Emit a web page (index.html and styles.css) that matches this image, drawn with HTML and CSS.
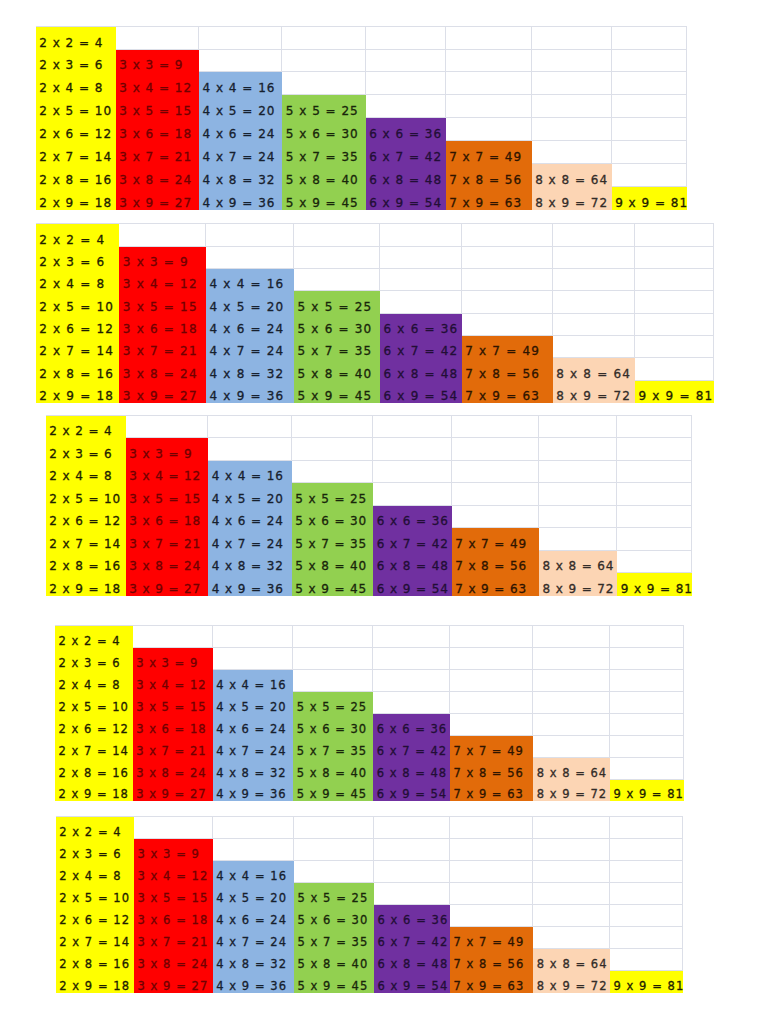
FILE: index.html
```html
<!DOCTYPE html>
<html lang="en">
<head>
<meta charset="utf-8">
<title>Tablas de multiplicar</title>
<link rel="stylesheet" href="styles.css">
</head>
<body>
<main class="page">

<section class="sheet sheet-1">
<div class="c c2">2 x 2 = 4</div><div class="c e"></div><div class="c e"></div><div class="c e"></div><div class="c e"></div><div class="c e"></div><div class="c e"></div><div class="c e"></div>
<div class="c c2">2 x 3 = 6</div><div class="c c3">3 x 3 = 9</div><div class="c e"></div><div class="c e"></div><div class="c e"></div><div class="c e"></div><div class="c e"></div><div class="c e"></div>
<div class="c c2">2 x 4 = 8</div><div class="c c3">3 x 4 = 12</div><div class="c c4">4 x 4 = 16</div><div class="c e"></div><div class="c e"></div><div class="c e"></div><div class="c e"></div><div class="c e"></div>
<div class="c c2">2 x 5 = 10</div><div class="c c3">3 x 5 = 15</div><div class="c c4">4 x 5 = 20</div><div class="c c5">5 x 5 = 25</div><div class="c e"></div><div class="c e"></div><div class="c e"></div><div class="c e"></div>
<div class="c c2">2 x 6 = 12</div><div class="c c3">3 x 6 = 18</div><div class="c c4">4 x 6 = 24</div><div class="c c5">5 x 6 = 30</div><div class="c c6">6 x 6 = 36</div><div class="c e"></div><div class="c e"></div><div class="c e"></div>
<div class="c c2">2 x 7 = 14</div><div class="c c3">3 x 7 = 21</div><div class="c c4">4 x 7 = 24</div><div class="c c5">5 x 7 = 35</div><div class="c c6">6 x 7 = 42</div><div class="c c7">7 x 7 = 49</div><div class="c e"></div><div class="c e"></div>
<div class="c c2">2 x 8 = 16</div><div class="c c3">3 x 8 = 24</div><div class="c c4">4 x 8 = 32</div><div class="c c5">5 x 8 = 40</div><div class="c c6">6 x 8 = 48</div><div class="c c7">7 x 8 = 56</div><div class="c c8">8 x 8 = 64</div><div class="c e"></div>
<div class="c c2">2 x 9 = 18</div><div class="c c3">3 x 9 = 27</div><div class="c c4">4 x 9 = 36</div><div class="c c5">5 x 9 = 45</div><div class="c c6">6 x 9 = 54</div><div class="c c7">7 x 9 = 63</div><div class="c c8">8 x 9 = 72</div><div class="c c9">9 x 9 = 81</div>
</section>

<section class="sheet sheet-2">
<div class="c c2">2 x 2 = 4</div><div class="c e"></div><div class="c e"></div><div class="c e"></div><div class="c e"></div><div class="c e"></div><div class="c e"></div><div class="c e"></div>
<div class="c c2">2 x 3 = 6</div><div class="c c3">3 x 3 = 9</div><div class="c e"></div><div class="c e"></div><div class="c e"></div><div class="c e"></div><div class="c e"></div><div class="c e"></div>
<div class="c c2">2 x 4 = 8</div><div class="c c3">3 x 4 = 12</div><div class="c c4">4 x 4 = 16</div><div class="c e"></div><div class="c e"></div><div class="c e"></div><div class="c e"></div><div class="c e"></div>
<div class="c c2">2 x 5 = 10</div><div class="c c3">3 x 5 = 15</div><div class="c c4">4 x 5 = 20</div><div class="c c5">5 x 5 = 25</div><div class="c e"></div><div class="c e"></div><div class="c e"></div><div class="c e"></div>
<div class="c c2">2 x 6 = 12</div><div class="c c3">3 x 6 = 18</div><div class="c c4">4 x 6 = 24</div><div class="c c5">5 x 6 = 30</div><div class="c c6">6 x 6 = 36</div><div class="c e"></div><div class="c e"></div><div class="c e"></div>
<div class="c c2">2 x 7 = 14</div><div class="c c3">3 x 7 = 21</div><div class="c c4">4 x 7 = 24</div><div class="c c5">5 x 7 = 35</div><div class="c c6">6 x 7 = 42</div><div class="c c7">7 x 7 = 49</div><div class="c e"></div><div class="c e"></div>
<div class="c c2">2 x 8 = 16</div><div class="c c3">3 x 8 = 24</div><div class="c c4">4 x 8 = 32</div><div class="c c5">5 x 8 = 40</div><div class="c c6">6 x 8 = 48</div><div class="c c7">7 x 8 = 56</div><div class="c c8">8 x 8 = 64</div><div class="c e"></div>
<div class="c c2">2 x 9 = 18</div><div class="c c3">3 x 9 = 27</div><div class="c c4">4 x 9 = 36</div><div class="c c5">5 x 9 = 45</div><div class="c c6">6 x 9 = 54</div><div class="c c7">7 x 9 = 63</div><div class="c c8">8 x 9 = 72</div><div class="c c9">9 x 9 = 81</div>
</section>

<section class="sheet sheet-3">
<div class="c c2">2 x 2 = 4</div><div class="c e"></div><div class="c e"></div><div class="c e"></div><div class="c e"></div><div class="c e"></div><div class="c e"></div><div class="c e"></div>
<div class="c c2">2 x 3 = 6</div><div class="c c3">3 x 3 = 9</div><div class="c e"></div><div class="c e"></div><div class="c e"></div><div class="c e"></div><div class="c e"></div><div class="c e"></div>
<div class="c c2">2 x 4 = 8</div><div class="c c3">3 x 4 = 12</div><div class="c c4">4 x 4 = 16</div><div class="c e"></div><div class="c e"></div><div class="c e"></div><div class="c e"></div><div class="c e"></div>
<div class="c c2">2 x 5 = 10</div><div class="c c3">3 x 5 = 15</div><div class="c c4">4 x 5 = 20</div><div class="c c5">5 x 5 = 25</div><div class="c e"></div><div class="c e"></div><div class="c e"></div><div class="c e"></div>
<div class="c c2">2 x 6 = 12</div><div class="c c3">3 x 6 = 18</div><div class="c c4">4 x 6 = 24</div><div class="c c5">5 x 6 = 30</div><div class="c c6">6 x 6 = 36</div><div class="c e"></div><div class="c e"></div><div class="c e"></div>
<div class="c c2">2 x 7 = 14</div><div class="c c3">3 x 7 = 21</div><div class="c c4">4 x 7 = 24</div><div class="c c5">5 x 7 = 35</div><div class="c c6">6 x 7 = 42</div><div class="c c7">7 x 7 = 49</div><div class="c e"></div><div class="c e"></div>
<div class="c c2">2 x 8 = 16</div><div class="c c3">3 x 8 = 24</div><div class="c c4">4 x 8 = 32</div><div class="c c5">5 x 8 = 40</div><div class="c c6">6 x 8 = 48</div><div class="c c7">7 x 8 = 56</div><div class="c c8">8 x 8 = 64</div><div class="c e"></div>
<div class="c c2">2 x 9 = 18</div><div class="c c3">3 x 9 = 27</div><div class="c c4">4 x 9 = 36</div><div class="c c5">5 x 9 = 45</div><div class="c c6">6 x 9 = 54</div><div class="c c7">7 x 9 = 63</div><div class="c c8">8 x 9 = 72</div><div class="c c9">9 x 9 = 81</div>
</section>

<section class="sheet sheet-4">
<div class="c c2">2 x 2 = 4</div><div class="c e"></div><div class="c e"></div><div class="c e"></div><div class="c e"></div><div class="c e"></div><div class="c e"></div><div class="c e"></div>
<div class="c c2">2 x 3 = 6</div><div class="c c3">3 x 3 = 9</div><div class="c e"></div><div class="c e"></div><div class="c e"></div><div class="c e"></div><div class="c e"></div><div class="c e"></div>
<div class="c c2">2 x 4 = 8</div><div class="c c3">3 x 4 = 12</div><div class="c c4">4 x 4 = 16</div><div class="c e"></div><div class="c e"></div><div class="c e"></div><div class="c e"></div><div class="c e"></div>
<div class="c c2">2 x 5 = 10</div><div class="c c3">3 x 5 = 15</div><div class="c c4">4 x 5 = 20</div><div class="c c5">5 x 5 = 25</div><div class="c e"></div><div class="c e"></div><div class="c e"></div><div class="c e"></div>
<div class="c c2">2 x 6 = 12</div><div class="c c3">3 x 6 = 18</div><div class="c c4">4 x 6 = 24</div><div class="c c5">5 x 6 = 30</div><div class="c c6">6 x 6 = 36</div><div class="c e"></div><div class="c e"></div><div class="c e"></div>
<div class="c c2">2 x 7 = 14</div><div class="c c3">3 x 7 = 21</div><div class="c c4">4 x 7 = 24</div><div class="c c5">5 x 7 = 35</div><div class="c c6">6 x 7 = 42</div><div class="c c7">7 x 7 = 49</div><div class="c e"></div><div class="c e"></div>
<div class="c c2">2 x 8 = 16</div><div class="c c3">3 x 8 = 24</div><div class="c c4">4 x 8 = 32</div><div class="c c5">5 x 8 = 40</div><div class="c c6">6 x 8 = 48</div><div class="c c7">7 x 8 = 56</div><div class="c c8">8 x 8 = 64</div><div class="c e"></div>
<div class="c c2">2 x 9 = 18</div><div class="c c3">3 x 9 = 27</div><div class="c c4">4 x 9 = 36</div><div class="c c5">5 x 9 = 45</div><div class="c c6">6 x 9 = 54</div><div class="c c7">7 x 9 = 63</div><div class="c c8">8 x 9 = 72</div><div class="c c9">9 x 9 = 81</div>
</section>

<section class="sheet sheet-5">
<div class="c c2">2 x 2 = 4</div><div class="c e"></div><div class="c e"></div><div class="c e"></div><div class="c e"></div><div class="c e"></div><div class="c e"></div><div class="c e"></div>
<div class="c c2">2 x 3 = 6</div><div class="c c3">3 x 3 = 9</div><div class="c e"></div><div class="c e"></div><div class="c e"></div><div class="c e"></div><div class="c e"></div><div class="c e"></div>
<div class="c c2">2 x 4 = 8</div><div class="c c3">3 x 4 = 12</div><div class="c c4">4 x 4 = 16</div><div class="c e"></div><div class="c e"></div><div class="c e"></div><div class="c e"></div><div class="c e"></div>
<div class="c c2">2 x 5 = 10</div><div class="c c3">3 x 5 = 15</div><div class="c c4">4 x 5 = 20</div><div class="c c5">5 x 5 = 25</div><div class="c e"></div><div class="c e"></div><div class="c e"></div><div class="c e"></div>
<div class="c c2">2 x 6 = 12</div><div class="c c3">3 x 6 = 18</div><div class="c c4">4 x 6 = 24</div><div class="c c5">5 x 6 = 30</div><div class="c c6">6 x 6 = 36</div><div class="c e"></div><div class="c e"></div><div class="c e"></div>
<div class="c c2">2 x 7 = 14</div><div class="c c3">3 x 7 = 21</div><div class="c c4">4 x 7 = 24</div><div class="c c5">5 x 7 = 35</div><div class="c c6">6 x 7 = 42</div><div class="c c7">7 x 7 = 49</div><div class="c e"></div><div class="c e"></div>
<div class="c c2">2 x 8 = 16</div><div class="c c3">3 x 8 = 24</div><div class="c c4">4 x 8 = 32</div><div class="c c5">5 x 8 = 40</div><div class="c c6">6 x 8 = 48</div><div class="c c7">7 x 8 = 56</div><div class="c c8">8 x 8 = 64</div><div class="c e"></div>
<div class="c c2">2 x 9 = 18</div><div class="c c3">3 x 9 = 27</div><div class="c c4">4 x 9 = 36</div><div class="c c5">5 x 9 = 45</div><div class="c c6">6 x 9 = 54</div><div class="c c7">7 x 9 = 63</div><div class="c c8">8 x 9 = 72</div><div class="c c9">9 x 9 = 81</div>
</section>

</main>
</body>
</html>
```

FILE: styles.css
```css
html, body {
  margin: 0;
  padding: 0;
  background: #ffffff;
}

.page {
  display: flex;
  flex-direction: column;
  align-items: flex-start;
  padding-top: 26.7px;
  font-family: "DejaVu Sans", "Liberation Sans", sans-serif;
}

.sheet {
  display: grid;
  box-shadow: 0 -1px 0 #dcdfe8;
  font-size: 12px;
  letter-spacing: 1px;
}

.sheet-1 {
  margin-left: 35.7px;
  grid-template-columns: 80px 83.3px 83.3px 83.4px 80px 86px 80px 75.3px;
  grid-auto-rows: 22.9px;
}

.sheet-2 {
  margin-top: 14.3px;
  margin-left: 35.7px;
  grid-template-columns: 83.6px 86.7px 88px 86px 81.7px 91px 82.3px 79.3px;
  grid-auto-rows: 22.4px;
  letter-spacing: 1.2px;
}

.sheet-3 {
  margin-top: 12.4px;
  margin-left: 45.7px;
  grid-template-columns: 80px 82.6px 83.4px 81.6px 78.4px 87.3px 78.3px 74.4px;
  grid-auto-rows: 22.5px;
  letter-spacing: 0.9px;
}

.sheet-4 {
  margin-top: 30.7px;
  margin-left: 55px;
  grid-template-columns: 77.7px 80px 80.6px 80px 76.7px 83.3px 76.7px 74px;
  grid-auto-rows: 21.9px;
  font-size: 11.5px;
  letter-spacing: 1px;
}

.sheet-5 {
  margin-top: 16px;
  margin-left: 55.7px;
  grid-template-columns: 78.3px 78.7px 81.3px 80px 76px 83.3px 76.7px 73.3px;
  grid-auto-rows: 21.95px;
  font-size: 11.5px;
  letter-spacing: 1.05px;
}

.c {
  box-sizing: border-box;
  display: flex;
  align-items: flex-end;
  padding: 0 0 0 3.5px;
  white-space: nowrap;
  line-height: normal;
  -webkit-text-stroke: 0.3px currentColor;
}

.e {
  border-right: 1px solid #dcdfe8;
  border-bottom: 1px solid #dcdfe8;
}

.c2 { background: #ffff00; color: #1e1e00; }
.c3 { background: #ff0000; color: #700000; }
.c4 { background: #8db4e2; color: #16202e; }
.c5 { background: #92d050; color: #18260a; }
.c6 { background: #7030a0; color: #220e36; }
.c7 { background: #e26b0a; color: #2e1400; }
.c8 { background: #fcd5b4; color: #332c28; }
.c9 { background: #ffff00; color: #1e1e00; }
```
